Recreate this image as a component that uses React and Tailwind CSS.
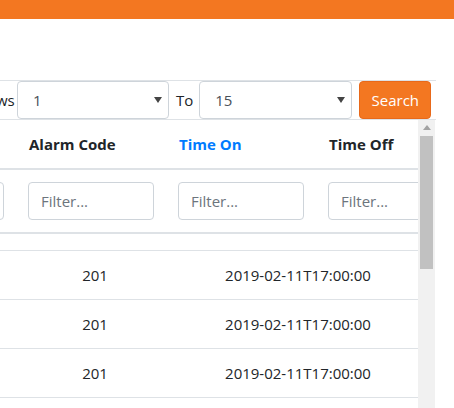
const rows = [
  { code: '201', timeOn: '2019-02-11T17:00:00' },
  { code: '201', timeOn: '2019-02-11T17:00:00' },
  { code: '201', timeOn: '2019-02-11T17:00:00' },
];

const SelectBox = ({ value, className }) => (
  <div className={`h-[38px] flex items-center justify-between bg-white border border-[#ced4da] rounded pl-[15px] pr-[6px] text-[#495057] ${className}`}>
    <span>{value}</span>
    <svg className="w-[8px] h-[6px]" viewBox="0 0 8 6">
      <path d="M0 0h8L4 6z" fill="#444" />
    </svg>
  </div>
);

const FilterInput = () => (
  <input
    placeholder="Filter..."
    className="w-[126px] h-[38px] border border-[#ced4da] rounded px-[12px] text-[15px] placeholder:text-[#6c757d] bg-white outline-none"
  />
);

const App = () => {
  return (
    <div className="w-[454px] h-[408px] overflow-hidden bg-white text-[#212529] text-[15px]" style={{ fontFamily: '"Open Sans", "Noto Sans", sans-serif' }}>
      {/* top bar */}
      <div className="h-[19px] bg-[#f37721]" />

      <div className="h-[61px]" />

      {/* toolbar */}
      <div className="w-[436px] h-[40px] border-t border-b border-[#dee2e6] flex items-center">
        <span className="-ml-[4px] w-[21px] text-[15px]">ws</span>
        <SelectBox value="1" className="w-[152px]" />
        <span className="ml-[7px] mr-[6px] text-[15px]">To</span>
        <SelectBox value="15" className="w-[153px]" />
        <button className="ml-[7px] w-[72px] h-[38px] bg-[#f37721] border border-[#e8691a] rounded text-white text-[15px]">
          Search
        </button>
      </div>

      {/* table */}
      <div className="flex h-[288px]">
        <div className="w-[418px] overflow-hidden">
          <div className="-ml-[134px]">
            <div className="flex h-[50px] items-center font-bold border-b-2 border-[#dee2e6]">
              <div className="w-[150px] shrink-0" />
              <div className="w-[150px] shrink-0 pl-[13px]">Alarm Code</div>
              <div className="w-[150px] shrink-0 pl-[13px] text-[#007bff]">Time On</div>
              <div className="w-[150px] shrink-0 pl-[13px]">Time Off</div>
            </div>
            <div className="flex h-[64px] pt-[12px] border-b-2 border-[#dee2e6]">
              {[0, 1, 2, 3].map((i) => (
                <div key={i} className="w-[150px] shrink-0 pl-[12px]">
                  <FilterInput />
                </div>
              ))}
            </div>
          </div>
          <div className="h-[16px]" />
          {rows.map((r, i) => (
            <div key={i} className="flex h-[49px] items-center border-t border-[#dee2e6]">
              <div className="w-[190px] shrink-0 text-center">{r.code}</div>
              <div className="w-[216px] shrink-0 text-center">{r.timeOn}</div>
            </div>
          ))}
          <div className="h-[11px] border-t border-[#dee2e6]" />
        </div>

        {/* scrollbar */}
        <div className="w-[17px] bg-[#f1f1f1] flex flex-col items-center">
          <svg className="mt-[5px] w-[8px] h-[5px]" viewBox="0 0 8 5">
            <path d="M0 5L4 0L8 5z" fill="#a3a3a3" />
          </svg>
          <div className="mt-[6px] w-[13px] h-[133px] bg-[#c1c1c1]" />
        </div>
      </div>
    </div>
  );
};

export default App;
